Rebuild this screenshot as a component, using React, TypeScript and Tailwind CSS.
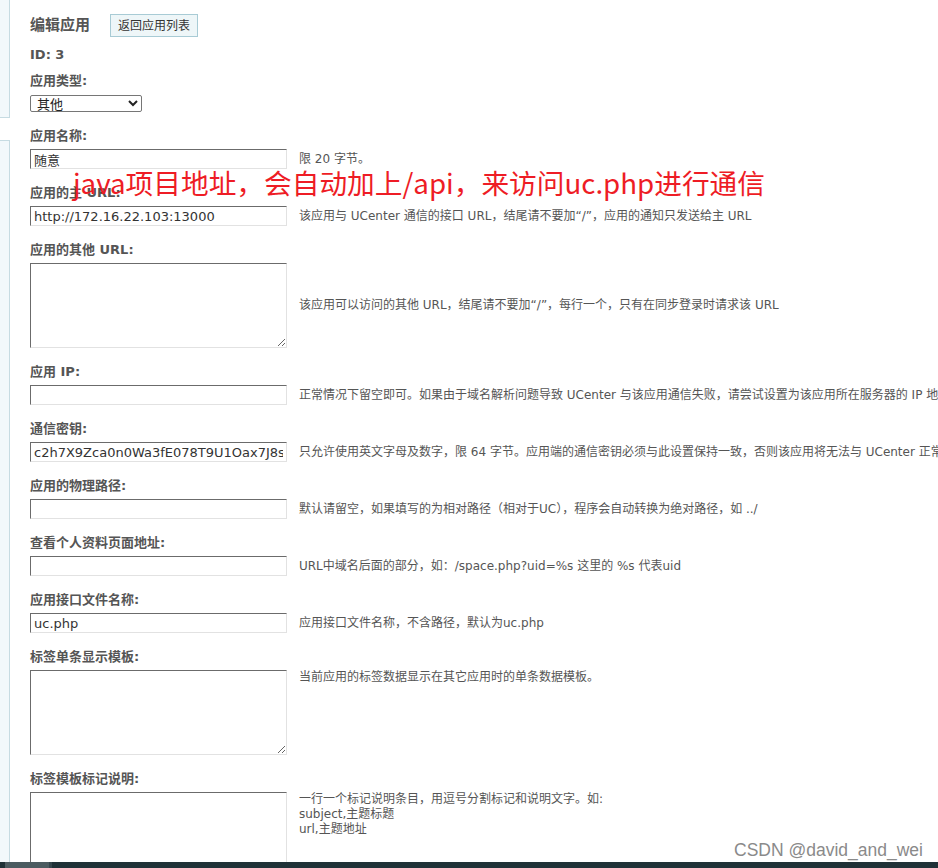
import React from "react";

type Field = {
  label: string;
  kind: "input" | "textarea";
  value?: string;
  desc: React.ReactNode;
  align?: "center" | "top";
};

const fields: Field[] = [
  { label: "应用名称:", kind: "input", value: "随意", desc: "限 20 字节。" },
  {
    label: "应用的主 URL:",
    kind: "input",
    value: "http://172.16.22.103:13000",
    desc: "该应用与 UCenter 通信的接口 URL，结尾请不要加“/”，应用的通知只发送给主 URL",
  },
  {
    label: "应用的其他 URL:",
    kind: "textarea",
    desc: "该应用可以访问的其他 URL，结尾请不要加“/”，每行一个，只有在同步登录时请求该 URL",
  },
  {
    label: "应用 IP:",
    kind: "input",
    value: "",
    desc: "正常情况下留空即可。如果由于域名解析问题导致 UCenter 与该应用通信失败，请尝试设置为该应用所在服务器的 IP 地址。",
  },
  {
    label: "通信密钥:",
    kind: "input",
    value: "c2h7X9Zca0n0Wa3fE078T9U1Oax7J8sbt7e1b4",
    desc: "只允许使用英文字母及数字，限 64 字节。应用端的通信密钥必须与此设置保持一致，否则该应用将无法与 UCenter 正常通信。",
  },
  {
    label: "应用的物理路径:",
    kind: "input",
    value: "",
    desc: "默认请留空，如果填写的为相对路径（相对于UC），程序会自动转换为绝对路径，如 ../",
  },
  {
    label: "查看个人资料页面地址:",
    kind: "input",
    value: "",
    desc: "URL中域名后面的部分，如：/space.php?uid=%s 这里的 %s 代表uid",
  },
  {
    label: "应用接口文件名称:",
    kind: "input",
    value: "uc.php",
    desc: "应用接口文件名称，不含路径，默认为uc.php",
  },
  {
    label: "标签单条显示模板:",
    kind: "textarea",
    desc: "当前应用的标签数据显示在其它应用时的单条数据模板。",
    align: "top",
  },
  {
    label: "标签模板标记说明:",
    kind: "textarea",
    desc: (
      <>
        一行一个标记说明条目，用逗号分割标记和说明文字。如:
        <br />
        subject,主题标题
        <br />
        url,主题地址
      </>
    ),
    align: "top",
  },
];

const boxBorder =
  "border border-t-[#6b6b6b] border-l-[#6b6b6b] border-r-[#e2e2e2] border-b-[#e2e2e2]";

const App = () => {
  return (
    <div className="relative flex h-[868px] w-full flex-col overflow-hidden bg-white font-['DejaVu_Sans','Noto_Sans_CJK_SC',sans-serif] text-[#555]">
      <div className="flex min-h-0 flex-1">
        {/* left rail */}
        <div className="flex w-[10px] shrink-0 flex-col">
          <div className="h-[118px] border-r border-b border-[#c6dbe2] bg-[#f2f8fb]" />
          <div className="mt-[22px] flex-1 border-r border-t border-[#c6dbe2] bg-[#f2f8fb]" />
        </div>

        <div className="min-w-0 flex-1 pl-[20px] pt-[14px]">
          <div className="flex h-[23px] items-center">
            <h2 className="w-[80px] text-[15px] font-bold text-[#555]">编辑应用</h2>
            <button className="h-[23px] w-[88px] border border-[#a8cbd5] bg-[#eef6f8] text-[12px] text-[#333]">
              返回应用列表
            </button>
          </div>
          <div className="mt-[9px] h-[18px] text-[13px] leading-[18px] font-bold">ID: 3</div>
          <div className="mt-[8px] h-[18px] text-[13px] leading-[18px] font-bold">应用类型:</div>
          <select className="mt-[5px] block h-[17px] w-[112px] rounded-[2px] border border-[#767676] bg-white pl-[2px] text-[13px] leading-[15px] text-[#222]">
            <option>其他</option>
          </select>

          {fields.map((field) => (
            <div key={field.label} className="mt-[15px]">
              <div className="h-[18px] text-[13px] leading-[18px] font-bold whitespace-nowrap">
                {field.label}
              </div>
              <div
                className={`mt-[4px] flex ${
                  field.align === "top" ? "items-start" : "items-center"
                }`}
              >
                {field.kind === "input" ? (
                  <input
                    type="text"
                    defaultValue={field.value}
                    className={`h-[20px] w-[257px] shrink-0 bg-white px-[3px] text-[13px] text-[#333] outline-none ${boxBorder}`}
                  />
                ) : (
                  <textarea
                    className={`block h-[85px] w-[257px] shrink-0 bg-white text-[13px] outline-none ${boxBorder}`}
                  />
                )}
                <div className="ml-[12px] text-[12px] leading-[15px] whitespace-nowrap text-[#555]">
                  {field.desc}
                </div>
              </div>
            </div>
          ))}
        </div>
      </div>

      {/* bottom scrollbar strip */}
      <div className="flex h-[6px] shrink-0 bg-[#1f3137]">
        <div className="ml-[5px] w-[44px] bg-[#4b5b60]" />
        <div className="w-[3px] bg-[#34464c]" />
      </div>

      <div className="absolute top-[168px] left-[73px] text-[27.7px] leading-[28px] whitespace-nowrap text-[#ee1c25] font-['Noto_Sans_CJK_SC',sans-serif]">
        java项目地址，会自动加上/api，来访问uc.php进行通信
      </div>

      <div className="absolute right-[15px] bottom-[8px] text-[17.5px] leading-[20px] text-[#8a8a8a] font-['Liberation_Sans',sans-serif]">
        CSDN @david_and_wei
      </div>
    </div>
  );
};

export default App;
